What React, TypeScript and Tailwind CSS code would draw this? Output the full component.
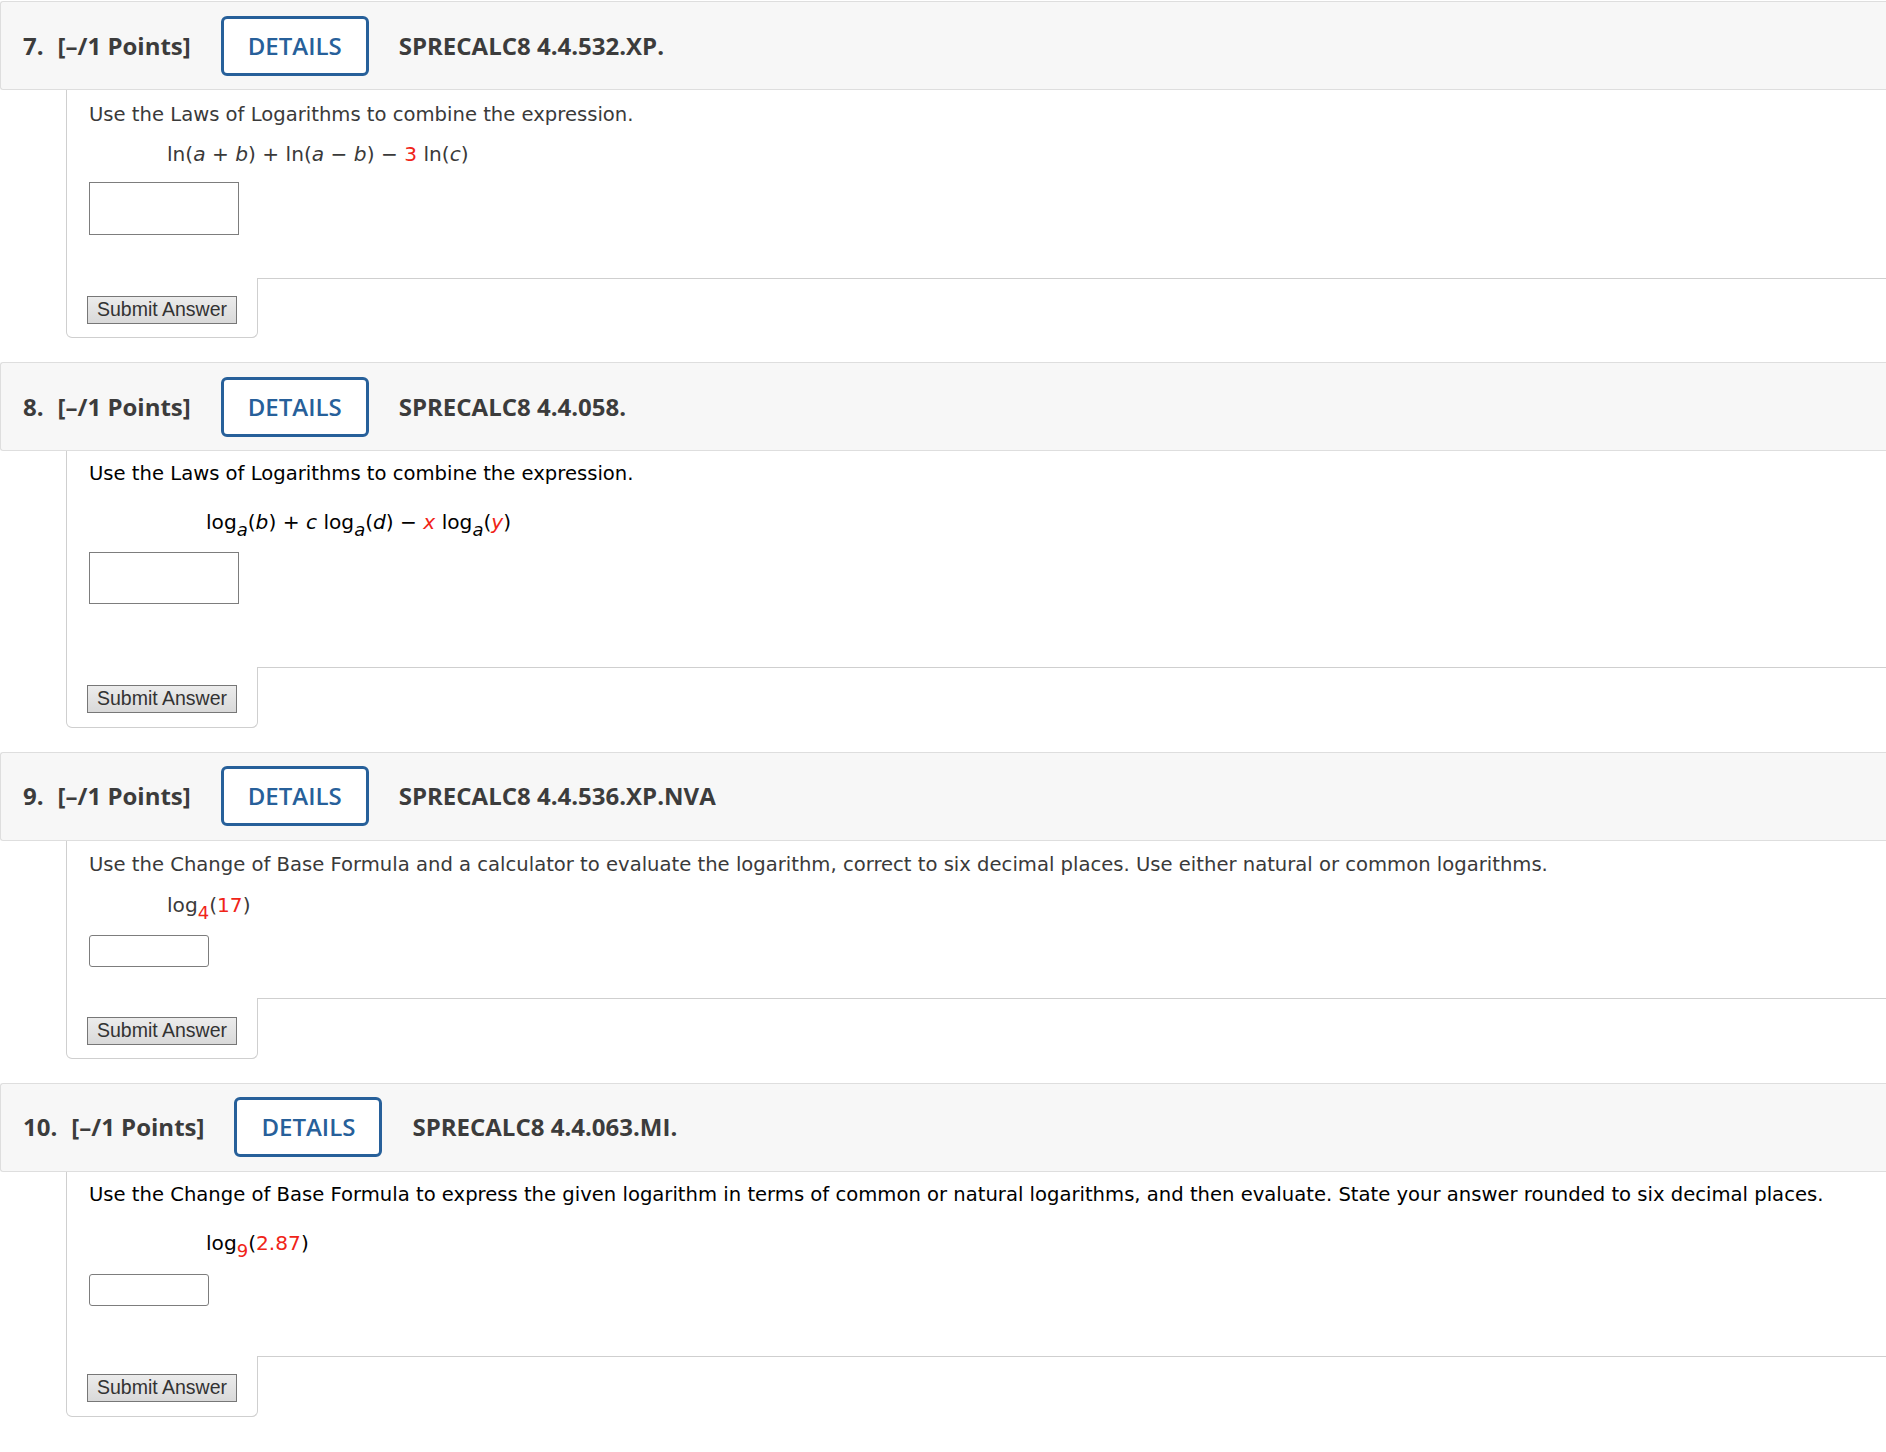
import React from "react";

const R = ({ children }: { children: React.ReactNode }) => <span className="text-[#f02418]">{children}</span>;
const I = ({ children }: { children: React.ReactNode }) => <i>{children}</i>;
const Sub = ({ children }: { children: React.ReactNode }) => (
  <sub className="relative top-[7px] align-baseline text-[18px] leading-none">{children}</sub>
);

function Question({
  num, code, text, math, dark, mathLeft, textTop, mathTop, inputTop, inputClass, lineGap, below, after, headPad,
}: {
  num: string; code: string; text: string; math: React.ReactNode; dark: boolean; mathLeft: string;
  textTop: string; mathTop: string; inputTop: string; inputClass: string; lineGap: string; below: string; after: string; headPad: string;
}) {
  return (
    <section className={after}>
      <div className={`flex h-[89px] items-center rounded-l-[3px] border border-r-0 border-[#dedede] bg-[#f7f7f7] pl-[22px] ${headPad} font-['Open_Sans',sans-serif] text-[24px] font-bold text-[#3c3c3c]`}>
        <span className="mr-[14px]">{num}</span>
        <span className="mr-[30px]">[–/1 Points]</span>
        <span className="mr-[30px] flex h-[60px] w-[148px] items-center justify-center rounded-[6px] border-[3px] border-[#27609a] bg-white font-semibold text-[#27609a]">
          DETAILS
        </span>
        <span>{code}</span>
      </div>
      <div className={`ml-[66px] border-l border-[#cfcfcf] pl-[22px] font-['DejaVu_Sans',sans-serif] text-[19.6px] ${dark ? "text-black" : "text-[#3a3a3a]"} ${lineGap}`}>
        <p className={`${textTop} leading-[24px]`}>{text}</p>
        <p className={`${mathLeft} ${mathTop} text-[20.15px] leading-[24px]`}>{math}</p>
        <div className={`${inputTop} ${inputClass} border border-[#7d7d7d] bg-white`} />
      </div>
      <div className="ml-[66px] flex">
        <div className={`${below} w-[192px] rounded-b-[6px] border-x border-b border-[#cfcfcf] pl-[20px]`}>
          <button className="h-[28px] w-[150px] border border-[#777] bg-gradient-to-b from-[#ececec] to-[#d9d9d9] font-['Liberation_Sans',sans-serif] text-[19.5px] leading-none text-[#333]">
            Submit Answer
          </button>
        </div>
        <div className="flex-1 border-t border-[#cfcfcf]" />
      </div>
    </section>
  );
}

export default function App() {
  return (
    <div className="min-h-[1452px] bg-white pt-px">
      <Question
        num="7." code="SPRECALC8 4.4.532.XP." dark={false} mathLeft="ml-[78px]" headPad="pt-px"
        text="Use the Laws of Logarithms to combine the expression."
        math={<>ln(<I>a</I> + <I>b</I>) + ln(<I>a</I> − <I>b</I>) − <R>3</R> ln(<I>c</I>)</>}
        textTop="pt-[13px]" mathTop="mt-[15px]" inputTop="mt-[16px]" inputClass="h-[53px] w-[150px]"
        lineGap="h-[188px]" below="h-[60px] pt-[18px]" after="mb-[24px]"
      />
      <Question
        num="8." code="SPRECALC8 4.4.058." dark mathLeft="ml-[117px]" headPad="pt-px"
        text="Use the Laws of Logarithms to combine the expression."
        math={<>log<Sub><I>a</I></Sub>(<I>b</I>) + <I>c</I> log<Sub><I>a</I></Sub>(<I>d</I>) − <R><I>x</I></R> log<Sub><I>a</I></Sub>(<R><I>y</I></R>)</>}
        textTop="pt-[11px]" mathTop="mt-[24px]" inputTop="mt-[18px]" inputClass="h-[52px] w-[150px]"
        lineGap="h-[216px]" below="h-[61px] pt-[18px]" after="mb-[24px]"
      />
      <Question
        num="9." code="SPRECALC8 4.4.536.XP.NVA" dark={false} mathLeft="ml-[78px]" headPad="pb-px"
        text="Use the Change of Base Formula and a calculator to evaluate the logarithm, correct to six decimal places. Use either natural or common logarithms."
        math={<>log<Sub><R>4</R></Sub>(<R>17</R>)</>}
        textTop="pt-[12px]" mathTop="mt-[16px]" inputTop="mt-[18px]" inputClass="h-[32px] w-[120px] rounded-[3px]"
        lineGap="h-[157px]" below="h-[61px] pt-[19px]" after="mb-[24px]"
      />
      <Question
        num="10." code="SPRECALC8 4.4.063.MI." dark mathLeft="ml-[117px]" headPad="pb-px"
        text="Use the Change of Base Formula to express the given logarithm in terms of common or natural logarithms, and then evaluate. State your answer rounded to six decimal places."
        math={<>log<Sub><R>9</R></Sub>(<R>2.87</R>)</>}
        textTop="pt-[11px]" mathTop="mt-[24px]" inputTop="mt-[19px]" inputClass="h-[32px] w-[120px] rounded-[3px]"
        lineGap="h-[184px]" below="h-[61px] pt-[18px]" after=""
      />
    </div>
  );
}
